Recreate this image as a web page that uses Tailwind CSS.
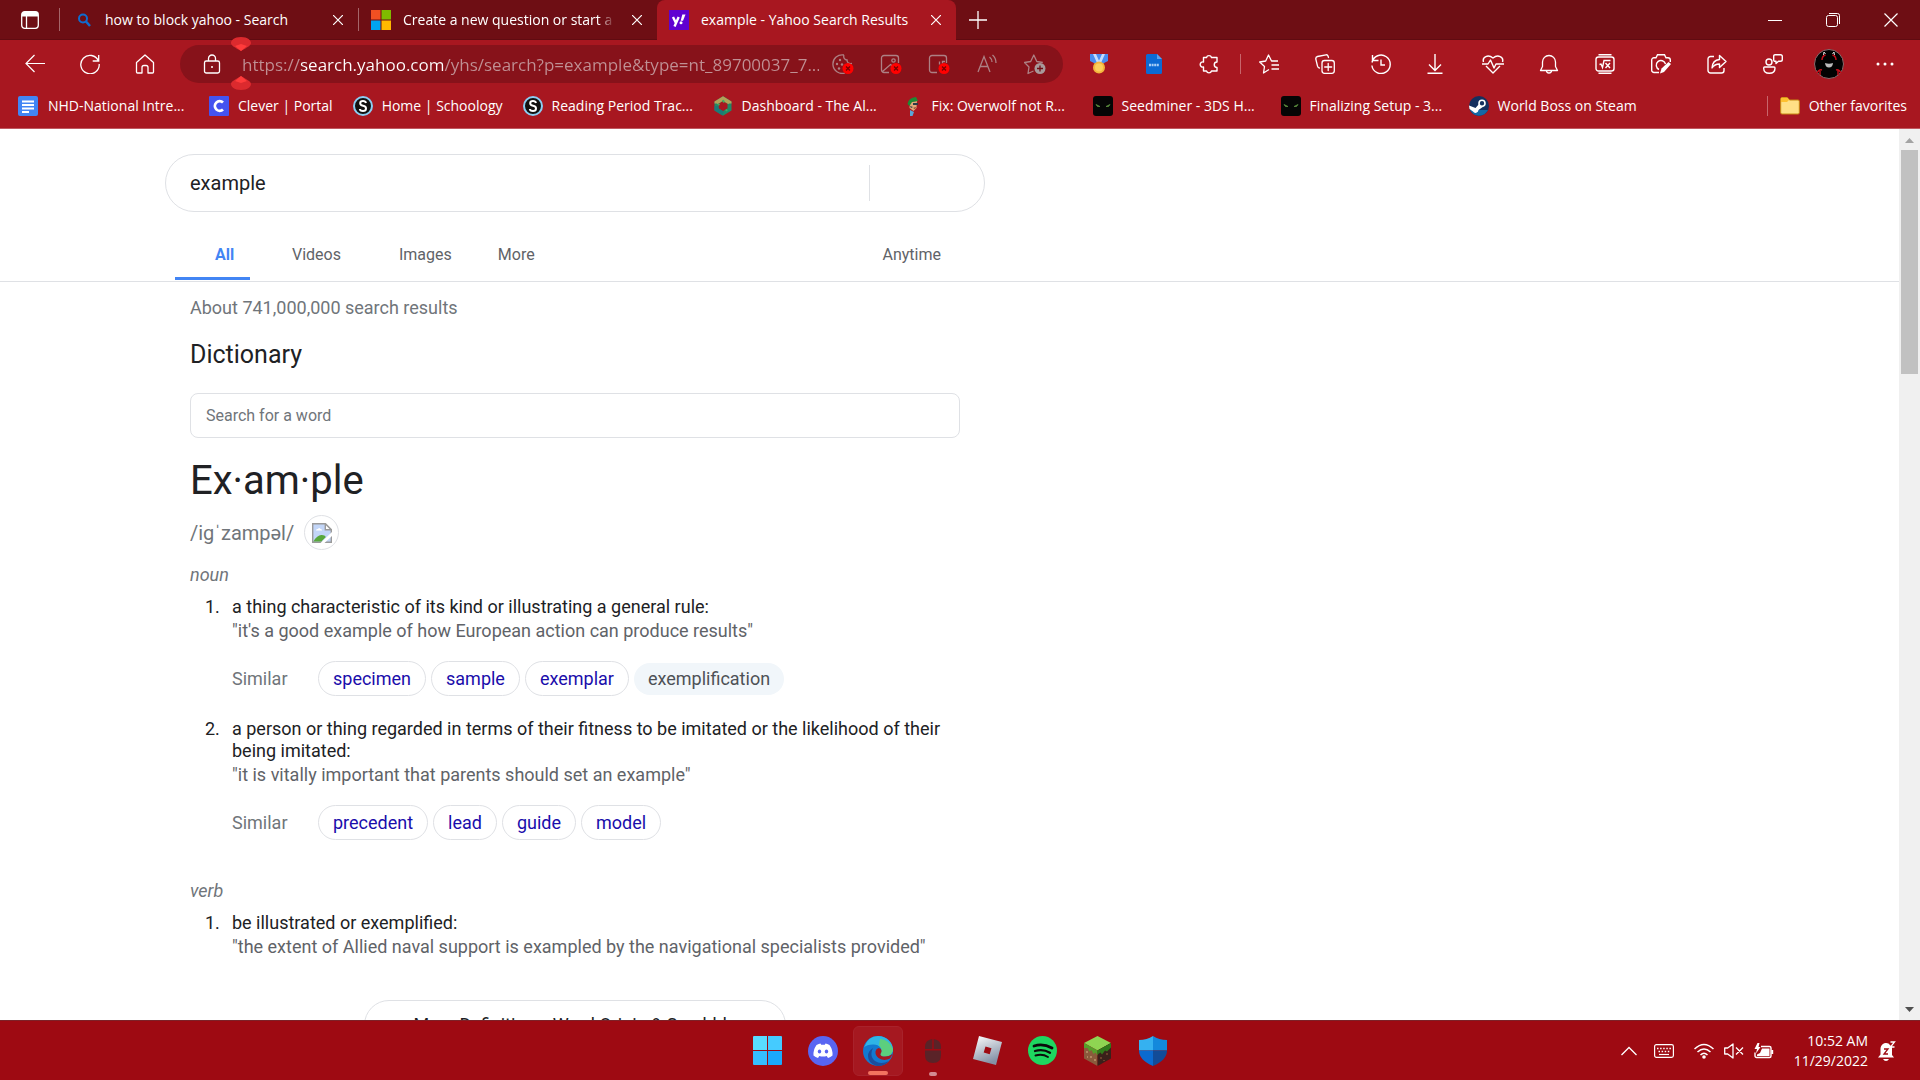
<!doctype html>
<html lang="en">

<head>
    <meta charset="UTF-8">
    <meta name="viewport" content="width=device-width, initial-scale=1.0">
    <title>example - Yahoo Search Results</title>
    <script src="https://cdn.jsdelivr.net/npm/@tailwindcss/browser@4"></script>
</head>

<body class="h-screen flex flex-col overflow-hidden bg-white font-['Open_Sans','Noto_Sans',sans-serif] text-sm text-white">
    <!-- Browser chrome -->
    <header class="shrink-0 bg-[#a81720] border-b border-[#c05860]">
        <!-- Tab strip -->
        <div class="h-10 flex items-stretch bg-[#6e0e14] border-b border-[#600b11]">
            <button aria-label="Tab actions" class="w-[59px] flex items-center justify-center">
                <svg class="size-5" viewBox="0 0 20 20" fill="none" stroke="#fff" stroke-width="1.3">
                    <rect x="1.7" y="1.7" width="16.6" height="16.6" rx="3" />
                    <path d="M2 4h16M2 5.5h16M3 3h14" stroke-width="2" />
                    <path d="M6.5 6v12" />
                </svg>
            </button>
            <div class="w-px my-2 bg-[#a5666a]"></div>
            <div class="w-[298px] flex items-center pl-[17px] pr-2.5">
                <svg class="size-4 mr-3 shrink-0" viewBox="0 0 16 16" fill="none" stroke="#0f6cd0" stroke-width="2">
                    <circle cx="6" cy="6.5" r="4" />
                    <path d="M9 9.5l4 4.5" stroke-width="2.5" />
                </svg>
                <button class="flex-1 text-left whitespace-nowrap overflow-hidden">how to block yahoo - Search</button>
                <button aria-label="Close tab" class="size-5 flex items-center justify-center">
                    <svg class="size-2.5" viewBox="0 0 10 10" stroke="#fff" stroke-width="1.2"><path d="M0 0l10 10M10 0L0 10" /></svg>
                </button>
            </div>
            <div class="w-px my-2 bg-[#a5666a]"></div>
            <div class="w-[298px] flex items-center pl-3 pr-2.5">
                <svg class="size-5 mr-3 shrink-0" viewBox="0 0 20 20">
                    <path fill="#f25022" d="M0 0h9.500v9.500H0z" />
                    <path fill="#7fba00" d="M10.500 0H20v9.500h-9.500z" />
                    <path fill="#00a4ef" d="M0 10.500h9.500V20H0z" />
                    <path fill="#ffb900" d="M10.500 10.500H20V20h-9.500z" />
                </svg>
                <button class="flex-1 mr-3 text-left whitespace-nowrap overflow-hidden [mask-image:linear-gradient(to_right,black_92%,transparent)]">Create a new question or start a</button>
                <button aria-label="Close tab" class="size-5 flex items-center justify-center">
                    <svg class="size-2.5" viewBox="0 0 10 10" stroke="#fff" stroke-width="1.2"><path d="M0 0l10 10M10 0L0 10" /></svg>
                </button>
            </div>
            <div class="w-[299px] flex items-center pl-3 pr-2.5 -mb-px rounded-t-lg bg-[#a81720]">
                <svg class="size-5 mr-3 shrink-0" viewBox="0 0 20 20">
                    <path fill="#5f01d1" d="M0 0h20v20H0z" />
                    <path d="M4 7l2.700 5.500M9.700 7L5.500 16.500" stroke="#fff" stroke-width="2.400" fill="none" />
                    <path fill="#fff" d="M13.300 4.500h3.200l-2.500 6.200h-2.300z" />
                    <circle cx="12" cy="12.700" r="1.500" fill="#fff" />
                </svg>
                <button class="flex-1 text-left whitespace-nowrap overflow-hidden">example - Yahoo Search Results</button>
                <button aria-label="Close tab" class="size-5 flex items-center justify-center">
                    <svg class="size-2.5" viewBox="0 0 10 10" stroke="#fff" stroke-width="1.2"><path d="M0 0l10 10M10 0L0 10" /></svg>
                </button>
            </div>
            <button aria-label="New tab" class="w-11 flex items-center justify-center">
                <svg class="size-[18px]" viewBox="0 0 18 18" stroke="#fff" stroke-width="1.3"><path d="M9 0v18M0 9h18" /></svg>
            </button>
            <div class="ml-auto flex">
                <button aria-label="Minimize" class="w-[58px] flex items-center justify-center">
                    <svg class="size-[14px]" viewBox="0 0 14 14" stroke="#fff"><path d="M0 7.500h14" /></svg>
                </button>
                <button aria-label="Restore" class="w-[58px] flex items-center justify-center">
                    <svg class="size-[14px]" viewBox="0 0 14 14" fill="none" stroke="#fff">
                        <rect x=".5" y="2.500" width="11" height="11" rx="2" />
                        <path d="M3 .5h8.500a2 2 0 0 1 2 2V11" />
                    </svg>
                </button>
                <button aria-label="Close" class="w-[58px] flex items-center justify-center">
                    <svg class="size-[14px]" viewBox="0 0 14 14" stroke="#fff" stroke-width="1.200"><path d="M.5 .5l13 13M13.500 .5l-13 13" /></svg>
                </button>
            </div>
        </div>

        <!-- Toolbar -->
        <div class="h-12 flex items-center px-[7px]">
            <button aria-label="Back" class="w-[55px] flex justify-center">
                <svg class="size-5" viewBox="0 0 20 20" fill="none" stroke="#fff" stroke-width="1.200"><path d="M20 9.500H1M9.500 1L1 9.500 9.500 18" /></svg>
            </button>
            <button aria-label="Refresh" class="w-[55px] flex justify-center">
                <svg class="size-5" viewBox="0 0 20 20" fill="none" stroke="#fff" stroke-width="1.300">
                    <path d="M18.500 7A9.200 9.200 0 1 0 19.200 10M18.700 1v6h-6" />
                </svg>
            </button>
            <button aria-label="Home" class="w-[55px] flex justify-center">
                <svg class="size-5" viewBox="0 0 20 20" fill="none" stroke="#fff" stroke-width="1.300" stroke-linejoin="round">
                    <path d="M1.500 8.500L10 1l8.500 7.500V18a1 1 0 0 1-1 1H13v-5.500a2 2 0 0 0-2-2H9a2 2 0 0 0-2 2V19H2.500a1 1 0 0 1-1-1z" />
                </svg>
            </button>

            <div class="relative flex-1 h-[38px] mx-2 pl-3 pr-1 flex items-center rounded-full bg-[#87121a]">
                <button aria-label="View site information" class="w-10 mr-2.5 flex justify-center">
                    <svg class="size-5" viewBox="0 0 20 20" fill="none" stroke="#fff" stroke-width="1.300">
                        <rect x="2.500" y="7" width="15" height="12" rx="1.800" />
                        <path d="M6.500 7V4.500a3.500 3.500 0 0 1 7 0V7" />
                        <circle cx="10" cy="13" r="1" fill="#fff" stroke="none" />
                    </svg>
                </button>
                <input type="text" aria-label="Address" value="https://search.yahoo.com/yhs/search?p=example&amp;type=nt_89700037_7..."
                    class="flex-1 min-w-0 h-7 text-[17px] text-transparent bg-clip-text bg-[linear-gradient(90deg,#c09094_0_58px,#fff_58px_202px,#c09094_202px)] outline-none">
                <!-- Touch selection handles -->
                <svg class="absolute left-[51px] -top-2 w-5 h-[53px]" viewBox="0 0 20 53">
                    <path fill="#dc2a2e" d="M10 0c7 0 10 3.500 10 6s-4 4.500-10 8C4 10.500 0 8.500 0 6s3-6 10-6zM10 53c7 0 10-3.500 10-6s-4-4.500-10-8C4 42.500 0 44.500 0 47s3 6 10 6z" />
                    <path fill="#ff3b3b" d="M4 9l6-2 6 2-6 5zM4 44l6 2 6-2-6-5z" />
                </svg>
                <button aria-label="Cookies blocked" class="w-12 flex justify-center">
                    <svg class="w-[22px] h-5" viewBox="0 0 22 20" fill="none" stroke="#ad8084" stroke-width="1.300">
                        <path d="M12 1a9.300 9.300 0 1 0 1 18M12 1c-1 3 1 5 3 5 0 3 2 4 5 3.500" />
                        <g fill="#ad8084" stroke="none"><circle cx="8" cy="6" r="1.200" /><circle cx="5" cy="10" r="1.200" /><circle cx="10" cy="10.500" r="1.200" /><circle cx="7" cy="14.500" r="1.200" /></g>
                        <circle cx="16" cy="14.500" r="5.500" fill="#f00" stroke="none" />
                        <path d="M14 12.500l4 4m0-4l-4 4" stroke="#700" />
                    </svg>
                </button>
                <button aria-label="Images blocked" class="w-12 flex justify-center">
                    <svg class="w-[22px] h-5" viewBox="0 0 22 20" fill="none" stroke="#ad8084" stroke-width="1.300">
                        <path d="M9 18.500H4A2.500 2.500 0 0 1 1.500 16V4A2.500 2.500 0 0 1 4 1.500h12A2.500 2.500 0 0 1 18.500 4v5M2.500 17.500l8-7 2 1.500" />
                        <circle cx="13.500" cy="6.500" r="1.700" />
                        <circle cx="16" cy="14.500" r="5.500" fill="#f00" stroke="none" />
                        <path d="M14 12.500l4 4m0-4l-4 4" stroke="#700" />
                    </svg>
                </button>
                <button aria-label="JavaScript blocked" class="w-12 flex justify-center">
                    <svg class="w-[22px] h-5" viewBox="0 0 22 20" fill="none" stroke="#ad8084" stroke-width="1.300">
                        <path d="M9 18.500H4A2.500 2.500 0 0 1 1.500 16V4A2.500 2.500 0 0 1 4 1.500h12A2.500 2.500 0 0 1 18.500 4v5M11.500 7.500v3M17 7.500h-2.500v2" />
                        <circle cx="16" cy="14.500" r="5.500" fill="#f00" stroke="none" />
                        <path d="M14 12.500l4 4m0-4l-4 4" stroke="#700" />
                    </svg>
                </button>
                <button aria-label="Read aloud" class="w-12 flex justify-center">
                    <svg class="size-5" viewBox="0 0 20 20" fill="none" stroke="#ad8084" stroke-width="1.300">
                        <path d="M1 18L7 2.500 13 18M3 12.500h8M12.500 3q2.500 2 2.500 5M15.500 1q3.500 3 3.500 8" />
                    </svg>
                </button>
                <button aria-label="Add to favorites" class="w-12 flex justify-center">
                    <svg class="w-[22px] h-[22px]" viewBox="0 0 22 22" fill="none" stroke="#ad8084" stroke-width="1.300" stroke-linejoin="round">
                        <path d="M9.500 18L4 20.500l1-6.500-4.500-4.500 6.200-1L9.800 2l3 6.500 6 1" />
                        <circle cx="16" cy="15.500" r="5.500" fill="#a8999a" stroke="none" />
                        <path d="M16 12.500v6M13 15.500h6" stroke="#700d14" />
                    </svg>
                </button>
            </div>

            <button aria-label="Medal extension" class="w-[55px] flex justify-center">
                <svg class="size-5" viewBox="0 0 20 20">
                    <path fill="#4a8cf0" d="M1 0h18v7l-6 3H7L1 7z" />
                    <path fill="#c6dcfb" d="M4 0h3l4 9H8zM13 0h3l-4 9H9z" />
                    <circle cx="10" cy="13.500" r="6" fill="#f4b63d" />
                    <circle cx="10" cy="13.500" r="4" fill="#fdcf5c" />
                </svg>
            </button>
            <button aria-label="Apps extension" class="w-[55px] flex justify-center">
                <svg class="w-4 h-5" viewBox="0 0 16 20">
                    <path fill="#0c6ad4" d="M1.500 0H11l5 5v13.500a1.500 1.500 0 0 1-1.500 1.500h-13A1.500 1.500 0 0 1 0 18.500v-17A1.500 1.500 0 0 1 1.500 0z" />
                    <path fill="#5aa0ee" d="M11 0l5 5h-5z" />
                    <path d="M3 11h10" stroke="#a7cdf6" stroke-width="2.500" stroke-dasharray="2 .6" />
                </svg>
            </button>
            <button aria-label="Extensions" class="w-[55px] mr-1 flex justify-center">
                <svg class="size-5" viewBox="0 0 20 20" fill="none" stroke="#fff" stroke-width="1.400" stroke-linejoin="round">
                    <path d="M4.500 3.500H7.500a2.600 2.600 0 0 1 5 0H18v4.500a2.600 2.600 0 0 0 0 5.500V17h-5.500a2.600 2.600 0 0 1-5 0h-3v-4a2.600 2.600 0 1 1 0-5z" />
                </svg>
            </button>
            <div class="w-px h-5 bg-[#c8656b]"></div>
            <button aria-label="Favorites" class="w-14 flex justify-center">
                <svg class="size-5" viewBox="0 0 20 20" fill="none" stroke="#fff" stroke-width="1.300" stroke-linejoin="round">
                    <path d="M10 15.500L4.500 19l1-6.500L.7 8l6-1L9.500 1l3 6H19M12.500 11H20M12.500 15H20" />
                </svg>
            </button>
            <button aria-label="Collections" class="w-14 flex justify-center">
                <svg class="size-5" viewBox="0 0 20 20" fill="none" stroke="#fff" stroke-width="1.300" stroke-linecap="round">
                    <rect x="7" y="6.500" width="12.300" height="12.800" rx="2.500" />
                    <path d="M13.200 9.500v7M9.700 13h7M13.500 3.500L13 2q-.5-1.500-2-1.200L2.500 2.500Q.5 3 .8 5l1.700 7q.5 2 2 2" />
                </svg>
            </button>
            <button aria-label="History" class="w-14 flex justify-center">
                <svg class="size-5" viewBox="0 0 20 20" fill="none" stroke="#fff" stroke-width="1.400">
                    <path d="M1 8.500A9.200 9.200 0 1 1 .9 11.500M1.500 1v5.500h6M10 5.500V11h4" />
                </svg>
            </button>
            <button aria-label="Downloads" class="w-14 flex justify-center">
                <svg class="size-5" viewBox="0 0 20 20" fill="none" stroke="#fff" stroke-width="1.400"><path d="M8 0v16M2 10.500l6 6 6-6M.5 19.300h15" /></svg>
            </button>
            <button aria-label="Performance" class="w-14 flex justify-center">
                <svg class="w-[22px] h-5" viewBox="0 0 22 20" fill="none" stroke="#fff" stroke-width="1.400" stroke-linejoin="round">
                    <path d="M1.500 8C0 3 6 0 11 4c5-4 11-1 9.500 4M4 12l7 7 7-7M0 10h6l2.500-4 3.500 8 2-4h8" />
                </svg>
            </button>
            <button aria-label="Notifications" class="w-14 flex justify-center">
                <svg class="size-5" viewBox="0 0 20 20" fill="none" stroke="#fff" stroke-width="1.300" stroke-linejoin="round">
                    <path d="M3.500 8a6.500 6.500 0 0 1 13 0v4.500l2 4h-17l2-4zM7.500 16.500a2.500 2.500 0 0 0 5 0" />
                </svg>
            </button>
            <button aria-label="Math solver" class="w-14 flex justify-center">
                <svg class="size-5" viewBox="0 0 20 20" fill="none" stroke="#fff" stroke-width="1.400">
                    <rect x="1" y="3" width="18" height="14" rx="2.500" />
                    <path d="M3.500 .8h13M3.500 19.200h13M4.500 10.500l1.500-.5L7.500 13.500 9 6.500h6.500M10.500 9l4.500 5M15 9l-4.500 5" />
                </svg>
            </button>
            <button aria-label="Web capture" class="w-14 flex justify-center">
                <svg class="size-5" viewBox="0 0 20 20" fill="none" stroke="#fff" stroke-width="1.400">
                    <path d="M8 18.500H3A2.300 2.300 0 0 1 .7 16.200V6A2.300 2.300 0 0 1 3 3.700h2l1.500-3h7l1.500 3h2A2.300 2.300 0 0 1 19.300 6v2M8 15.500A4.700 4.700 0 1 1 14.500 10" />
                    <path d="M9 19.500l1.500-5 7-6.500 2.500 2-7 8z" fill="#fff" stroke="none" />
                </svg>
            </button>
            <button aria-label="Share" class="w-14 flex justify-center">
                <svg class="size-5" viewBox="0 0 20 20" fill="none" stroke="#fff" stroke-width="1.400" stroke-linejoin="round">
                    <path d="M7 2.500H3.500A2.500 2.500 0 0 0 1 5v11.500A2.500 2.500 0 0 0 3.500 19h11a2.500 2.500 0 0 0 2.500-2.500V14M12.500 1.500L19 7.500l-6.500 6v-3.500Q7.500 10 5 14q.5-8 7.500-8.500z" />
                </svg>
            </button>
            <button aria-label="Feedback" class="w-14 flex justify-center">
                <svg class="size-5" viewBox="0 0 20 20" fill="none" stroke="#fff" stroke-width="1.400" stroke-linejoin="round">
                    <circle cx="6" cy="8" r="3" />
                    <path d="M1.500 13h9.500a1 1 0 0 1 1 1q0 5.300-5.700 5.300T.7 14q0-1 .8-1zM12 .7h5.500a1.800 1.800 0 0 1 1.800 1.800v3a1.800 1.800 0 0 1-1.800 1.800H15.500L13 9.500V7.300h-1a1.300 1.300 0 0 1-1.300-1.300V2A1.300 1.300 0 0 1 12 .7z" />
                </svg>
            </button>
            <button aria-label="Profile" class="w-14 flex justify-center">
                <svg class="size-[30px]" viewBox="0 0 30 30">
                    <circle cx="15" cy="15" r="14.500" fill="#020202" stroke="#8a6c6e" />
                    <path d="M9.500 6l.5-3 1.500 2M20.500 6l-.5-3-1.500 2" stroke="#ddd" fill="none" />
                    <path d="M8 11q0-4 3.500-5M22 11q0-4-3.500-5M3 24q2-4 5-3M27 24q-2-4-5-3M24 21v5M6 22v4" stroke="#c4101c" stroke-width="1.500" fill="none" />
                    <path d="M11 14q4 1.500 8 0-.5 4.500-4 4.500T11 14z" fill="#bbb" />
                </svg>
            </button>
            <button aria-label="Settings and more" class="w-14 flex justify-center">
                <svg class="w-[18px] h-1" viewBox="0 0 18 4" fill="#fff"><circle cx="2" cy="2" r="1.500" /><circle cx="9" cy="2" r="1.500" /><circle cx="16" cy="2" r="1.500" /></svg>
            </button>
        </div>

        <!-- Favorites bar -->
        <nav aria-label="Favorites bar" class="h-10 flex items-start gap-5 pt-2 pl-[18px] pr-[13px] whitespace-nowrap leading-5">
            <a href="#" class="flex gap-2.5">
                <svg class="size-5" viewBox="0 0 20 20"><rect width="20" height="20" rx="2" fill="#4285f4" /><path d="M4 5.500h12M4 9h12M4 12.500h12M4 16h7" stroke="#fff" stroke-width="1.800" /></svg>
                <span class="w-[141px]">NHD-National Intre...</span>
            </a>
            <a href="#" class="flex gap-[9px]">
                <svg class="size-5" viewBox="0 0 20 20"><rect width="20" height="20" rx="1" fill="#4453f0" /><path d="M14 6.500a4.800 4.800 0 1 0 0 7" stroke="#fff" stroke-width="2.800" fill="none" /></svg>
                <span>Clever | Portal</span>
            </a>
            <a href="#" class="flex gap-[9px]">
                <svg class="size-5" viewBox="0 0 20 20"><circle cx="10" cy="10" r="9" fill="#111" stroke="#8ccdf2" stroke-width="2" /><path d="M13 7q-.5-2-3-2-2.800 0-2.800 2.300 0 2 2.800 2.500 3 .5 3 2.700 0 2.500-3 2.500T6.800 13" stroke="#fff" stroke-width="2" fill="none" /></svg>
                <span>Home | Schoology</span>
            </a>
            <a href="#" class="flex gap-[9px]">
                <svg class="size-5" viewBox="0 0 20 20"><circle cx="10" cy="10" r="9" fill="#111" stroke="#8ccdf2" stroke-width="2" /><path d="M13 7q-.5-2-3-2-2.800 0-2.800 2.300 0 2 2.800 2.500 3 .5 3 2.700 0 2.500-3 2.500T6.800 13" stroke="#fff" stroke-width="2" fill="none" /></svg>
                <span class="w-[141px]">Reading Period Trac...</span>
            </a>
            <a href="#" class="flex gap-[9px]">
                <svg class="size-5" viewBox="0 0 20 20" fill="none" stroke-width="4">
                    <path d="M10 2.500l6.500 4v7L10 17.500l-6.500-4v-7z" stroke="#1f8a68" />
                    <path d="M3.500 7.500v-1l6.500-4 6.500 4v1" stroke="#b3a158" />
                    <path d="M3.500 10v3.500l6.500 4" stroke="#1b7a78" />
                    <path d="M10 4l1 2.500M5 8l1.500 1M14 15l-1-1.500" stroke="#3fae62" stroke-width="2" />
                </svg>
                <span class="w-[141px]">Dashboard - The Al...</span>
            </a>
            <a href="#" class="flex gap-[9px]">
                <svg class="size-5" viewBox="0 0 20 20">
                    <path fill="#e0a878" d="M7 6l7-1-.5 7-3 3-4-3z" />
                    <path fill="#1e8a34" d="M4.500 8Q5 2 13 1l2 4-6 1-2.500 4z" />
                    <path fill="#2b3c46" d="M10 7h5v2h-5zM7 10l3 1-2 1z" />
                    <path fill="#5aa7d8" d="M7 14l4 2-1.500 4H7z" />
                    <path fill="#8a3b20" d="M10 12l3-1-1 2z" />
                </svg>
                <span class="w-[141px]">Fix: Overwolf not R...</span>
            </a>
            <a href="#" class="flex gap-[9px]">
                <svg class="size-5" viewBox="0 0 20 20"><rect width="20" height="20" rx="3" fill="#050505" /><path d="M3 8.500l4 2H4.500zM17 8.500l-4 2h2.500z" fill="#5e9440" stroke="#5e9440" stroke-width=".7" /></svg>
                <span class="w-[139px]">Seedminer - 3DS H...</span>
            </a>
            <a href="#" class="flex gap-[9px]">
                <svg class="size-5" viewBox="0 0 20 20"><rect width="20" height="20" rx="3" fill="#050505" /><path d="M3 8.500l4 2H4.500zM17 8.500l-4 2h2.500z" fill="#5e9440" stroke="#5e9440" stroke-width=".7" /></svg>
                <span class="w-[139px]">Finalizing Setup - 3...</span>
            </a>
            <a href="#" class="flex gap-[9px]">
                <svg class="size-5" viewBox="0 0 20 20">
                    <circle cx="10" cy="10" r="10" fill="#15305f" />
                    <path d="M1 14a10 10 0 0 0 18 0z" fill="#1568a5" />
                    <path d="M0 9.500l6.500 2.500 4-4.500 4 3-5 3.500a3 3 0 0 1-5.500 1.500L.5 13z" fill="#fff" />
                    <circle cx="13" cy="7.300" r="3" fill="#15305f" stroke="#fff" stroke-width="1.600" />
                </svg>
                <span>World Boss on Steam</span>
            </a>
            <a href="#" class="ml-auto flex gap-[9px] pl-3 border-l border-[#c8656b]">
                <svg class="size-5" viewBox="0 0 20 20">
                    <path d="M.7 3q0-1.500 1.500-1.500h5L9.500 4H18q1.300 0 1.300 1.300v11.400q0 1.300-1.300 1.300H2q-1.300 0-1.300-1.300z" fill="#ffe085" stroke="#c68a10" />
                    <path d="M1 6V3q0-1.200 1-1.200h5L9 4 7 6z" fill="#fdc02f" />
                </svg>
                <span>Other favorites</span>
            </a>
        </nav>
    </header>

    <!-- Page -->
    <div class="flex-1 min-h-0 flex font-[Roboto,sans-serif] text-[#202124]">
        <main class="flex-1 min-w-0 overflow-hidden">
            <div class="border-b border-[#dfe1e5] pt-[25px]">
                <form class="w-[820px] h-[58px] ml-[165px] pl-6 pr-[114px] flex items-center rounded-full border border-[#dfe1e5]">
                    <input type="text" aria-label="Search" value="example" class="flex-1 h-9 text-xl outline-none border-r border-[#dfe1e5]">
                </form>
                <nav class="w-[785px] h-[69px] ml-[175px] pt-2 pb-px flex text-base leading-6 text-[#5f6368]">
                    <a href="#" class="w-[75px] pl-10 mr-[42px] pt-[23px] border-b-3 border-[#4285f4] font-bold text-[#4285f4]">All</a>
                    <a href="#" class="mr-[58px] pt-[23px]">Videos</a>
                    <a href="#" class="mr-[46px] pt-[23px]">Images</a>
                    <a href="#" class="pt-[23px]">More</a>
                    <a href="#" class="ml-auto mr-[19px] pt-[23px]">Anytime</a>
                </nav>
            </div>

            <div class="w-[770px] ml-[190px] pt-[14px] text-lg leading-6">
                <p class="text-[#70757a]">About 741,000,000 search results</p>
                <h2 class="mt-[19px] text-[25px] leading-8">Dictionary</h2>
                <input type="text" aria-label="Search for a word" placeholder="Search for a word"
                    class="w-full h-[45px] mt-[22px] px-[15px] rounded-lg border border-[#dfe1e5] text-base placeholder:text-[#70757a] outline-none">
                <h1 class="mt-[19px] text-[40px] leading-12">Ex·am·ple</h1>
                <div class="mt-2.5 flex items-center gap-2.5 text-xl text-[#70757a]">
                    <span>/igˈzampəl/</span>
                    <button aria-label="Play pronunciation" class="size-[35px] flex items-center justify-center rounded-full border border-[#dfe1e5]">
                        <svg class="size-5" viewBox="0 0 20 20">
                            <path d="M.7 .7h12.600l6 6v12.600H.7z" fill="#c3d6f8" stroke="#9a9a9a" stroke-width="1.400" />
                            <path d="M13.300 .7v6h6z" fill="#fff" stroke="#9a9a9a" stroke-width="1.400" />
                            <path d="M4 7.500q0-2 2-1.500 1-2 2.500 0 2 0 1.500 1.500z" fill="#fff" />
                            <path d="M1.400 18.600q4-7 8.500-6.500 3 0 4 2l-4.500 4.500z" fill="#58a83c" />
                            <path d="M20 9L8.500 20h4L20 13z" fill="#fff" />
                        </svg>
                    </button>
                </div>

                <p class="mt-[13px] italic text-[#70757a]">noun</p>
                <ol class="mt-[9px] list-none">
                    <li class="flex pl-[15px]">
                        <span class="w-[27px] shrink-0 leading-[22px]">1.</span>
                        <div class="flex-1">
                            <p class="leading-[22px]">a thing characteristic of its kind or illustrating a general rule:</p>
                            <p class="mt-px text-[#5f6368]">"it's a good example of how European action can produce results"</p>
                            <div class="mt-[18px] flex items-center gap-[5px] text-[#1a0dab]">
                                <span class="w-[81px] text-[#70757a]">Similar</span>
                                <a href="#" class="h-[35px] px-[14px] flex items-center rounded-full border border-[#dfe1e5]">specimen</a>
                                <a href="#" class="h-[35px] px-[14px] flex items-center rounded-full border border-[#dfe1e5]">sample</a>
                                <a href="#" class="h-[35px] px-[14px] flex items-center rounded-full border border-[#dfe1e5]">exemplar</a>
                                <span class="h-8 px-[14px] flex items-center rounded-full bg-[#f1f6fa] text-[#4d5156]">exemplification</span>
                            </div>
                        </div>
                    </li>
                    <li class="flex pl-[15px] mt-[22px]">
                        <span class="w-[27px] shrink-0 leading-[22px]">2.</span>
                        <div class="flex-1">
                            <p class="leading-[22px]">a person or thing regarded in terms of their fitness to be imitated or the likelihood of their being imitated:</p>
                            <p class="mt-px text-[#5f6368]">"it is vitally important that parents should set an example"</p>
                            <div class="mt-[18px] flex items-center gap-[5px] text-[#1a0dab]">
                                <span class="w-[81px] text-[#70757a]">Similar</span>
                                <a href="#" class="h-[35px] px-[14px] flex items-center rounded-full border border-[#dfe1e5]">precedent</a>
                                <a href="#" class="h-[35px] px-[14px] flex items-center rounded-full border border-[#dfe1e5]">lead</a>
                                <a href="#" class="h-[35px] px-[14px] flex items-center rounded-full border border-[#dfe1e5]">guide</a>
                                <a href="#" class="h-[35px] px-[14px] flex items-center rounded-full border border-[#dfe1e5]">model</a>
                            </div>
                        </div>
                    </li>
                </ol>

                <p class="mt-[39px] italic text-[#70757a]">verb</p>
                <ol class="mt-[9px] list-none">
                    <li class="flex pl-[15px]">
                        <span class="w-[27px] shrink-0 leading-[22px]">1.</span>
                        <div class="flex-1">
                            <p class="leading-[22px]">be illustrated or exemplified:</p>
                            <p class="mt-px text-[#5f6368]">"the extent of Allied naval support is exampled by the navigational specialists provided"</p>
                        </div>
                    </li>
                </ol>
                <button class="w-[422px] h-[50px] mt-[41px] mx-auto block rounded-full border border-[#dfe1e5]">More Definitions, Word Origin &amp; Scrabble</button>
            </div>
        </main>

        <!-- Scrollbar -->
        <div class="w-[21px] shrink-0 flex flex-col items-center bg-[#f0f0f0]">
            <svg class="w-[9px] h-[21px]" viewBox="0 0 9 21"><path d="M0 14l4.500-5 4.500 5z" fill="#a3a3a3" /></svg>
            <div class="w-[17px] h-[224px] bg-[#c1c1c1]"></div>
            <svg class="w-[9px] h-[21px] mt-auto" viewBox="0 0 9 21"><path d="M0 8l4.500 5L9 8z" fill="#505050" /></svg>
        </div>
    </div>

    <!-- Taskbar -->
    <footer class="h-[60px] shrink-0 grid grid-cols-[1fr_auto_1fr] items-center border-t border-[#7d2228] bg-[#9e0a12]">
        <div></div>
        <div class="flex items-center gap-[5px]">
            <button aria-label="Start" class="size-[50px] flex items-center justify-center">
                <svg class="size-[29px]" viewBox="0 0 29 29">
                    <path fill="#5adcff" d="M0 1q0-1 1-1h13v14H0z" /><path fill="#45cbff" d="M15 0h13q1 0 1 1v13H15z" />
                    <path fill="#35beff" d="M0 15h14v14H1q-1 0-1-1z" /><path fill="#1ba9fb" d="M15 15h14v13q0 1-1 1H15z" />
                </svg>
            </button>
            <button aria-label="Discord" class="size-[50px] flex items-center justify-center">
                <svg class="size-[30px]" viewBox="0 0 30 30">
                    <circle cx="15" cy="15" r="15" fill="#5865f2" />
                    <path fill="#fff" d="M8.500 9q2.500-1.300 4-1.500l.7 1.300h3.600l.7-1.300q1.500.2 4 1.500 3.500 5 3 10.500-2 1.800-4.500 2.500l-1.300-2q-3.700 1-7.400 0l-1.300 2Q7.500 21.300 5.500 19.500 5 14 8.500 9z" />
                    <ellipse cx="11.500" cy="15.500" rx="1.700" ry="2" fill="#5865f2" /><ellipse cx="18.500" cy="15.500" rx="1.700" ry="2" fill="#5865f2" />
                </svg>
            </button>
            <button aria-label="Microsoft Edge" class="relative size-[50px] flex items-center justify-center rounded-md border border-[#a8222b] bg-[#a51820]">
                <svg class="size-[30px]" viewBox="0 0 30 30">
                    <circle cx="15" cy="15" r="15" fill="#1279d0" />
                    <path fill="#2fb4e6" d="M1 11.500Q5 0 15 0c9 0 15 7 15 13 0 5-4 7.500-8 7.500-5 0-5-2-4-3.500 2-4-2-9-8-8.500-4 0-7.500 1-9 3z" />
                    <path fill="#5ccf7e" d="M17 3q8-.5 13 10c0 5-4 7.500-8 7.500-5 0-5-2-4-3.500 2-3.500-1-6-2-8z" />
                    <path fill="#1c4d9c" d="M10 12q-4 8 2 13 6 4 14 0-5 6-13 4.800Q5 27 5 20q0-5 5-8z" />
                    <path fill="#a51820" d="M18 17c-1 1.500-1 3.500 4 3.500q4 0 7.500-2.500-1 2.500-2.500 4.500-6 3-11.500-.5-3.500-3-3-6.500.5-3 3-3.500 3 .5 3 3 0 1-.5 2z" />
                </svg>
                <span class="absolute bottom-0 w-5 h-1 rounded-full bg-[#f3735f]"></span>
            </button>
            <button aria-label="Mouse software" class="relative size-[50px] flex items-center justify-center">
                <svg class="w-4 h-6" viewBox="0 0 16 24" fill="#5a2328">
                    <path d="M7.300 0v10H0V8q0-7 7.300-8zM8.700 0v10H16V8q0-7-7.300-8zM0 11.500h16V16q0 8-8 8t-8-8z" />
                </svg>
                <span class="absolute bottom-0 w-2 h-1 rounded-full bg-[#d38a92]"></span>
            </button>
            <button aria-label="Roblox" class="size-[50px] flex items-center justify-center">
                <svg class="size-[29px]" viewBox="0 0 29 29">
                    <defs>
                        <linearGradient id="steel" x1="0" y1="0" x2=".4" y2="1"><stop offset="0" stop-color="#fff" /><stop offset="1" stop-color="#8492a6" /></linearGradient>
                    </defs>
                    <path fill="url(#steel)" fill-rule="evenodd" d="M6 0l23 6-6 23-23-6zM12.500 10.500l-1.800 6 6 1.800 1.800-6z" />
                </svg>
            </button>
            <button aria-label="Spotify" class="size-[50px] flex items-center justify-center">
                <svg class="size-[29px]" viewBox="0 0 29 29" fill="none" stroke="#0b0b0b" stroke-linecap="round">
                    <circle cx="14.500" cy="14.500" r="14.500" fill="#1ed760" stroke="none" />
                    <path d="M6 10q9-3 18 2" stroke-width="2.800" /><path d="M7 15q8-2.500 15 1.700" stroke-width="2.300" /><path d="M7.500 19.500q7-2 12.500 1.500" stroke-width="1.900" />
                </svg>
            </button>
            <button aria-label="Minecraft" class="size-[50px] flex items-center justify-center">
                <svg class="w-[27px] h-[30px]" viewBox="0 0 27 30">
                    <path fill="#8fd552" d="M13.500 0L27 7 13.500 14.500 0 7z" />
                    <path fill="#8a5b3c" d="M0 7l13.500 7.500V30L0 22.500z" /><path fill="#3a201a" d="M27 7l-13.500 7.500V30L27 22.500z" />
                    <path fill="#55a02a" d="M0 7l13.500 7.500v5l-2-3-2 1.500-2-4-2 1.500-2-3.500L0 12z" />
                    <path fill="#2f7a1a" d="M27 7l-13.500 7.500v4l3-2 1.500 2 3-4 2 1 4-4z" />
                    <path fill="#b08560" d="M2 15h2v2H2zM6 20h2v2H6zM10 23h2v2h-2zM3 20h1v2H3z" />
                    <path fill="#6a3f2a" d="M16 21h2v2h-2zM22 17h2v2h-2zM19 24h2v1h-2z" />
                </svg>
            </button>
            <button aria-label="Windows Security" class="size-[50px] flex items-center justify-center">
                <svg class="w-7 h-[30px]" viewBox="0 0 28 30">
                    <path fill="#35b1f0" d="M14 0v14.500H0V4q8 0 14-4z" /><path fill="#1389dc" d="M14 0v14.500h14V4q-8 0-14-4z" />
                    <path fill="#0b6ad0" d="M14 30V14.500H0Q0 24 14 30z" /><path fill="#124c98" d="M14 30V14.500h14Q28 24 14 30z" />
                </svg>
            </button>
        </div>
        <div class="flex items-center justify-end pr-6">
            <button aria-label="Show hidden icons" class="mr-[17px]">
                <svg class="w-4 h-2.5" viewBox="0 0 16 10" fill="none" stroke="#fff" stroke-width="1.300"><path d="M.5 9L8 1.500 15.500 9" /></svg>
            </button>
            <button aria-label="Touch keyboard" class="mr-5">
                <svg class="w-5 h-[14px]" viewBox="0 0 20 14" fill="none" stroke="#fff" stroke-width="1.200">
                    <rect x=".6" y=".6" width="18.800" height="12.800" rx="1.800" />
                    <path d="M3 4.500h14M4.500 7.500h12" stroke-width="1.500" stroke-dasharray="1.500 1.600" /><path d="M5 10.500h10" />
                </svg>
            </button>
            <button aria-label="Network, volume and battery" class="flex items-center gap-2.5 mr-5">
                <svg class="w-5 h-4" viewBox="0 0 20 16" fill="none" stroke="#fff" stroke-width="1.500">
                    <path d="M.5 6q9.500-9 19 0M3.500 9q6.500-6 13 0M6.500 12q3.500-3.500 7 0" /><circle cx="10" cy="14" r="1.800" fill="#fff" stroke="none" />
                </svg>
                <svg class="w-5 h-4" viewBox="0 0 20 16" fill="none" stroke="#fff" stroke-width="1.300" stroke-linejoin="round">
                    <path d="M.7 5h3L9 1v14l-5.300-4h-3zM12 4.500l7 7M19 4.500l-7 7" />
                </svg>
                <svg class="w-5 h-4" viewBox="0 0 20 16" fill="none" stroke="#fff" stroke-width="1.400">
                    <path d="M7 3.500h8.500A1.500 1.500 0 0 1 17 5v8a1.500 1.500 0 0 1-1.500 1.500H2.500A1.500 1.500 0 0 1 1 13V9.500M18.500 7v4" />
                    <path d="M8 5.500h7.500V13H3v-1.500l3-1.500zM3.500 0L.5 6H3L2 10.500 6.500 4H4.500L5.500 0z" fill="#fff" stroke="none" />
                </svg>
            </button>
            <button class="text-right leading-5 mr-2.5">10:52 AM<br>11/29/2022</button>
            <button aria-label="Notifications">
                <svg class="w-[18px] h-5" viewBox="0 0 18 20">
                    <path fill="#fff" d="M2.500 8a5.700 5.700 0 0 1 8-5.500L14 6v8l2 2.500H0l2.500-3zM5 18h6q-1 2-3 2t-3-2z" />
                    <path d="M6 8h4l-4 5h4" stroke="#9e0a12" stroke-width="1.300" fill="none" />
                    <path d="M12.500 1h4l-4 5h4" stroke="#fff" stroke-width="1.300" fill="none" />
                </svg>
            </button>
        </div>
    </footer>
</body>

</html>
